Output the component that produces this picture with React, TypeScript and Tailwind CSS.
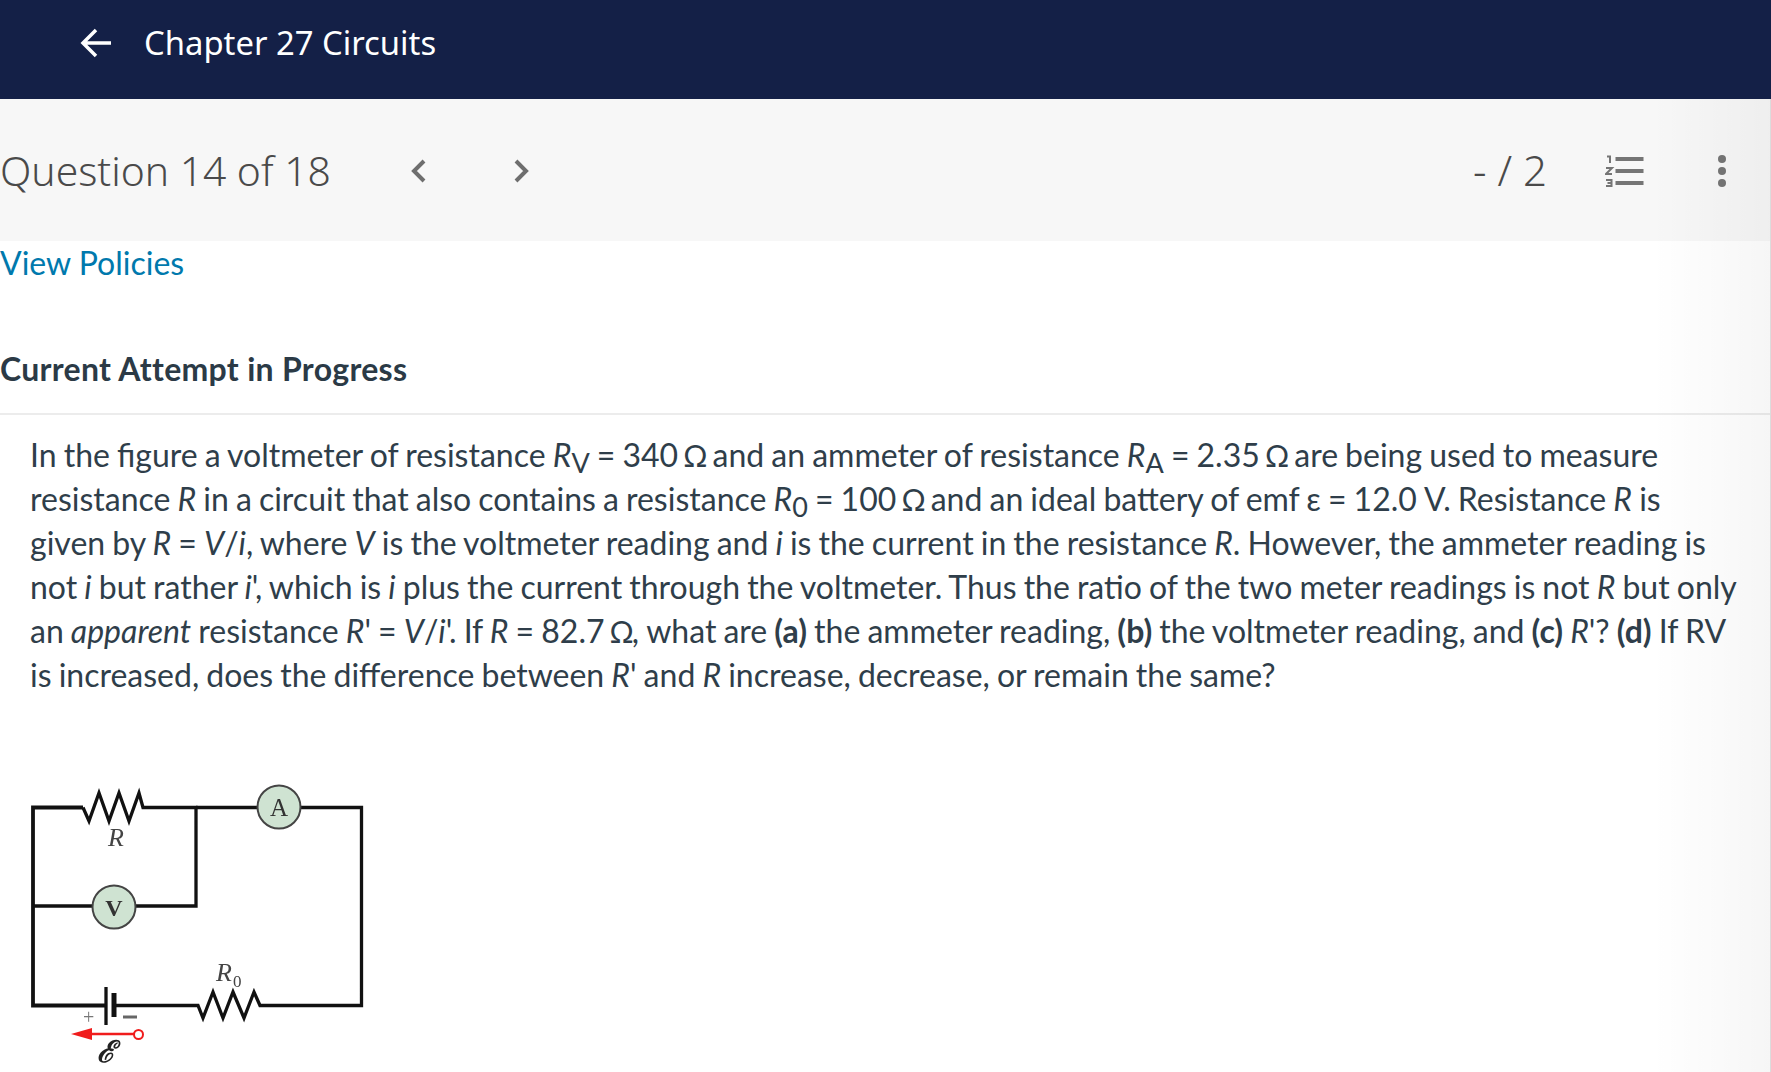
const R = ({ children }: { children: React.ReactNode }) => <i>{children}</i>;
const Sub = ({ children }: { children: React.ReactNode }) => (
  <sub className="bottom-0 text-[27px] leading-none align-[-6px]">{children}</sub>
);
const Om = () => <span className="-mx-[2px] text-[30px]">Ω</span>;

function Circuit() {
  return (
    <svg viewBox="0 0 400 312" className="block w-[400px] h-[312px] blur-[0.5px]" aria-hidden="true">
      <g fill="none" stroke="#111" strokeWidth="3.300">
        <path d="M83 47.500H33V245.500H106" strokeWidth="3.800" />
        <path d="M83 47.500L89 61L99 33L109 61L119 33L129 61L139 33L143 47.500H196V146H136" />
        <path d="M33 146H93" />
        <path d="M196 47.500H257M301 47.500H361.500V245.500H260L254 232L244 258L233 232L223 258L213 232L203 258L198 245.500H114" />
        <path d="M106 227V265" />
        <path d="M114 233V257" strokeWidth="5" />
      </g>
      <g fill="#cfe3d2" stroke="#444" strokeWidth="2">
        <circle cx="279" cy="47" r="21.500" />
        <circle cx="114" cy="147" r="21.500" />
      </g>
      <g fontFamily="'Liberation Serif', serif" fill="#333">
        <text x="279" y="56" textAnchor="middle" fontSize="25">A</text>
        <text x="114" y="156" textAnchor="middle" fontSize="24" fontWeight="700">V</text>
        <text x="108" y="86" fontSize="26" fontStyle="italic" fill="#444">R</text>
        <text x="216" y="221" fontSize="26" fontStyle="italic" fill="#444">R</text>
        <text x="233" y="227" fontSize="17" fill="#444">0</text>
        <text x="83" y="264" fontSize="20" fill="#777">+</text>
      </g>
      <path d="M123 257H137" stroke="#666" strokeWidth="3" />
      <path d="M90 274H134" stroke="#f01c1c" strokeWidth="2.500" />
      <path d="M71 274L92 268V280Z" fill="#f01c1c" />
      <circle cx="138.500" cy="274.500" r="4.500" fill="#fff" stroke="#f01c1c" strokeWidth="2" />
      <text x="106" y="302" textAnchor="middle" fontSize="30" fontWeight="700" fontStyle="italic" fontFamily="'Liberation Serif', serif" fill="#222">ℰ</text>
    </svg>
  );
}

export default function App() {
  return (
    <div className="relative w-[1771px] h-[1072px] overflow-hidden bg-white font-['Lato',sans-serif]">
      <header className="flex items-center h-[99px] pb-[14px] pl-[80px] bg-[#142047] text-white">
        <svg width="32" height="32" viewBox="0 0 32 32" fill="none" stroke="#fff" strokeWidth="3.500" aria-hidden="true">
          <path d="M31 16H5M16 3L3 16L16 29" />
        </svg>
        <span className="ml-[32px] mt-[2px] text-[32.8px] leading-none font-['Noto_Sans',sans-serif]">Chapter 27 Circuits</span>
      </header>

      <section className="flex items-center h-[142px] bg-[#f7f7f7] text-[#4a4a4a]">
        <h1 className="text-[40.8px] leading-none font-light font-['Noto_Sans',sans-serif]">Question 14 of 18</h1>
        <svg width="16" height="26" viewBox="0 0 16 26" fill="none" stroke="#6e6e6e" strokeWidth="4" className="ml-[79px] mt-[2px]" aria-hidden="true">
          <path d="M14 3L4 13L14 23" />
        </svg>
        <svg width="16" height="26" viewBox="0 0 16 26" fill="none" stroke="#6e6e6e" strokeWidth="4" className="ml-[88px] mt-[2px]" aria-hidden="true">
          <path d="M2 3L12 13L2 23" />
        </svg>
        <span className="ml-auto text-[42px] leading-none font-light font-['Noto_Sans',sans-serif]">- / 2</span>
        <svg width="40" height="32" viewBox="0 0 40 32" className="ml-[58px] mt-[2px]" aria-hidden="true">
          <path d="M10.500 2h28v4h-28zM10.500 14h28v4h-28zM10.500 26h28v4h-28z" fill="#757575" />
          <path d="M2 1.500H5V8M1 13H7L1 19H7M1 25H6.500V31H1M2.500 28H6.500" fill="none" stroke="#757575" strokeWidth="2" />
        </svg>
        <svg width="10" height="34" viewBox="0 0 10 34" fill="#757575" className="ml-[72px] mr-[44px] mt-[2px]" aria-hidden="true">
          <circle cx="5" cy="5" r="4" /><circle cx="5" cy="17" r="4" /><circle cx="5" cy="29" r="4" />
        </svg>
      </section>

      <a className="block -mt-[1px] text-[32px] leading-[46px] text-[#0079ad]">View Policies</a>

      <h2 className="mt-[61px] pb-[22px] border-b-2 border-[#ececec] text-[32px] leading-[44px] font-bold tracking-[0.3px] text-[#2b3a46]">Current Attempt in Progress</h2>

      <p className="mt-[18px] ml-[30px] w-[1720px] text-[32px] leading-[44px] [word-spacing:-1.1px] text-[#2f3e4a]">
        In the figure a voltmeter of resistance <R>R</R><Sub>V</Sub> = 340 <Om /> and an ammeter of resistance <R>R</R><Sub>A</Sub> = 2.35 <Om /> are being used to measure
        <br />
        resistance <R>R</R> in a circuit that also contains a resistance <R>R</R><Sub>0</Sub> = 100 <Om /> and an ideal battery of emf ε = 12.0 V. Resistance <R>R</R> is
        <br />
        given by <R>R</R> = <R>V</R>/<R>i</R>, where <R>V</R> is the voltmeter reading and <R>i</R> is the current in the resistance <R>R</R>. However, the ammeter reading is
        <br />
        not <R>i</R> but rather <R>i</R>', which is <R>i</R> plus the current through the voltmeter. Thus the ratio of the two meter readings is not <R>R</R> but only
        <br />
        an <R>apparent</R> resistance <R>R</R>' = <R>V</R>/<R>i</R>'. If <R>R</R> = 82.7 <Om />, what are <b>(a)</b> the ammeter reading, <b>(b)</b> the voltmeter reading, and <b>(c)</b> <R>R</R>'? <b>(d)</b> If RV
        <br />
        is increased, does the difference between <R>R</R>' and <R>R</R> increase, decrease, or remain the same?
      </p>

      <div className="mt-[63px]"><Circuit /></div>

      <div className="absolute top-[99px] right-0 bottom-0 w-[120px] pointer-events-none bg-gradient-to-r from-transparent to-black/[0.035] border-r border-[#dcdcdc]" />
    </div>
  );
}
